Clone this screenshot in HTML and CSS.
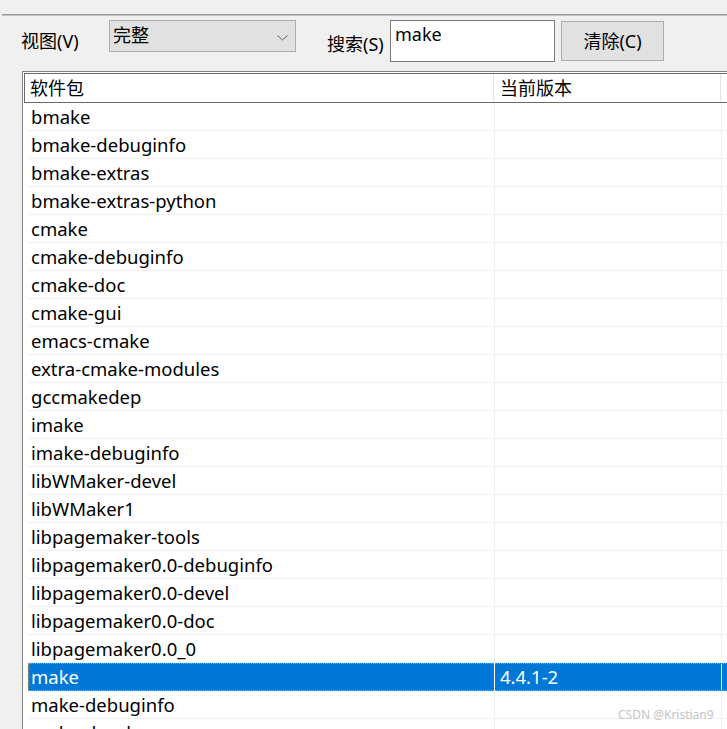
FILE: index.html
```html
<!DOCTYPE html>
<html lang="zh-CN">
<head>
<meta charset="utf-8">
<title>软件包</title>
<link rel="stylesheet" href="styles.css">
</head>
<body>
<div class="page">
  <div class="topline"></div>
  <div class="toolbar">
    <div class="label label-view">视图(V)</div>
    <div class="combo">
      <span class="combo-text">完整</span>
      <svg class="chev" width="11" height="6" viewBox="0 0 11 6"><polyline points="0.5,0.5 5.5,5 10.5,0.5" fill="none" stroke="#606060" stroke-width="1"/></svg>
    </div>
    <div class="label label-search">搜索(S)</div>
    <div class="search">make</div>
    <div class="btn">清除(C)</div>
  </div>
  <div class="list">
    <div class="header">
      <div class="hcell c1">软件包</div>
      <div class="hcell c2">当前版本</div>
      <div class="hcell c3"></div>
    </div>
    <div class="rows">
      <div class="row"><div class="cell c1">bmake</div><div class="cell c2"></div><div class="cell c3"></div></div>
      <div class="row"><div class="cell c1">bmake-debuginfo</div><div class="cell c2"></div><div class="cell c3"></div></div>
      <div class="row"><div class="cell c1">bmake-extras</div><div class="cell c2"></div><div class="cell c3"></div></div>
      <div class="row"><div class="cell c1">bmake-extras-python</div><div class="cell c2"></div><div class="cell c3"></div></div>
      <div class="row"><div class="cell c1">cmake</div><div class="cell c2"></div><div class="cell c3"></div></div>
      <div class="row"><div class="cell c1">cmake-debuginfo</div><div class="cell c2"></div><div class="cell c3"></div></div>
      <div class="row"><div class="cell c1">cmake-doc</div><div class="cell c2"></div><div class="cell c3"></div></div>
      <div class="row"><div class="cell c1">cmake-gui</div><div class="cell c2"></div><div class="cell c3"></div></div>
      <div class="row"><div class="cell c1">emacs-cmake</div><div class="cell c2"></div><div class="cell c3"></div></div>
      <div class="row"><div class="cell c1">extra-cmake-modules</div><div class="cell c2"></div><div class="cell c3"></div></div>
      <div class="row"><div class="cell c1">gccmakedep</div><div class="cell c2"></div><div class="cell c3"></div></div>
      <div class="row"><div class="cell c1">imake</div><div class="cell c2"></div><div class="cell c3"></div></div>
      <div class="row"><div class="cell c1">imake-debuginfo</div><div class="cell c2"></div><div class="cell c3"></div></div>
      <div class="row"><div class="cell c1">libWMaker-devel</div><div class="cell c2"></div><div class="cell c3"></div></div>
      <div class="row"><div class="cell c1">libWMaker1</div><div class="cell c2"></div><div class="cell c3"></div></div>
      <div class="row"><div class="cell c1">libpagemaker-tools</div><div class="cell c2"></div><div class="cell c3"></div></div>
      <div class="row"><div class="cell c1">libpagemaker0.0-debuginfo</div><div class="cell c2"></div><div class="cell c3"></div></div>
      <div class="row"><div class="cell c1">libpagemaker0.0-devel</div><div class="cell c2"></div><div class="cell c3"></div></div>
      <div class="row"><div class="cell c1">libpagemaker0.0-doc</div><div class="cell c2"></div><div class="cell c3"></div></div>
      <div class="row"><div class="cell c1">libpagemaker0.0_0</div><div class="cell c2"></div><div class="cell c3"></div></div>
      <div class="row selected"><div class="cell c1">make</div><div class="cell c2">4.4.1-2</div><div class="cell c3"></div></div>
      <div class="row"><div class="cell c1">make-debuginfo</div><div class="cell c2"></div><div class="cell c3"></div></div>
      <div class="row"><div class="cell c1">make-devel</div><div class="cell c2"></div><div class="cell c3"></div></div>
    </div>
  </div>
  <div class="watermark">CSDN @Kristian9</div>
</div>
</body>
</html>
```

FILE: styles.css
```css
html, body {
  margin: 0;
  padding: 0;
  background: #f0f0f0;
}
.page {
  position: relative;
  width: 727px;
  height: 729px;
  overflow: hidden;
  background: #f0f0f0;
  font-family: "Noto Sans", "Noto Sans CJK SC", sans-serif;
  font-size: 18px;
  color: #000;
}
.topline {
  height: 14px;
  margin-left: 2px;
  border-bottom: 1px solid #9c9c9c;
  box-shadow: 0 1px 0 #c4c4c4;
}
.toolbar {
  display: flex;
  align-items: flex-start;
  height: 56px;
  padding-left: 21px;
  box-sizing: border-box;
}
.label {
  line-height: 24px;
  white-space: nowrap;
}
.label-view {
  width: 88px;
  margin-top: 14px;
}
.label-search {
  width: 63px;
  margin-left: 31px;
  margin-top: 17px;
}
.combo {
  display: flex;
  justify-content: space-between;
  width: 187px;
  height: 32px;
  margin-top: 5px;
  box-sizing: border-box;
  border: 1px solid #adadad;
  background: #e1e1e1;
  padding: 2px 7px 0 3px;
  line-height: 24px;
}
.chev {
  margin-top: 12px;
}
.search {
  width: 165px;
  height: 42px;
  margin-top: 5px;
  box-sizing: border-box;
  border: 1px solid #7a7a7a;
  background: #fff;
  padding: 1px 0 0 4px;
  line-height: 24px;
}
.btn {
  width: 103px;
  height: 40px;
  margin-top: 6px;
  margin-left: 6px;
  box-sizing: border-box;
  border: 1px solid #adadad;
  background: #e1e1e1;
  display: flex;
  align-items: center;
  justify-content: center;
  line-height: 24px;
}
.list {
  margin-left: 22px;
  width: 740px;
  border-top: 1px solid #828282;
  border-left: 1px solid #828282;
  background: #fff;
  padding: 1px 0 0 1px;
  height: 700px;
}
.header {
  display: grid;
  grid-template-columns: 469px 227px 1fr;
  height: 30px;
  box-sizing: border-box;
  border: 1px solid #6b6b6b;
  border-right: none;
  background: #fff;
}
.hcell {
  line-height: 28px;
  white-space: nowrap;
}
.header .c1 {
  padding-left: 5px;
  border-right: 1px solid #e5e5e5;
}
.header .c2 {
  padding-left: 6px;
  border-right: 1px solid #e5e5e5;
}
.rows {
  margin-left: 4px;
}
.row {
  display: grid;
  grid-template-columns: 467px 227px 1fr;
  height: 28px;
  box-sizing: border-box;
  border-bottom: 1px solid #f0f0f0;
}
.cell {
  font-size: 18.5px;
  line-height: 28px;
  white-space: nowrap;
}
.row .c1 {
  padding-left: 3px;
  border-right: 1px solid #f0f0f0;
}
.row .c2 {
  padding-left: 5px;
  border-right: 1px solid #f0f0f0;
}
.row.selected {
  background: #0078d7;
  color: #fff;
  border-bottom-color: #0078d7;
  outline: 1px dotted #e0924a;
  outline-offset: -1px;
}
.row.selected .c1 {
  border-right-color: #ffffff;
}
.row.selected .c2 {
  border-right-color: #e8e8e8;
}
.watermark {
  position: absolute;
  left: 618px;
  top: 707px;
  font-family: "Noto Sans", sans-serif;
  font-size: 12px;
  line-height: 16px;
  color: #c4c4c4;
  white-space: nowrap;
}
```
